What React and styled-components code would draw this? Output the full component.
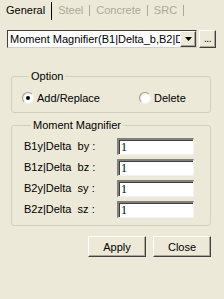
import React, { useState } from "react";
import styled, { createGlobalStyle } from "styled-components";

const GlobalStyle = createGlobalStyle`
  html, body {
    margin: 0;
    padding: 0;
    background: #ece9d8;
    width: 224px;
    height: 299px;
    overflow: hidden;
  }
  * { box-sizing: border-box; }
`;

const fields = [
  { label: "B1y|Delta  by :", value: "1" },
  { label: "B1z|Delta  bz :", value: "1" },
  { label: "B2y|Delta  sy :", value: "1" },
  { label: "B2z|Delta  sz :", value: "1" },
];

const tabs = ["General", "Steel", "Concrete", "SRC"];

const App = () => {
  const [mode, setMode] = useState("add");

  return (
    <Page>
      <GlobalStyle />
      <Tabs>
        {tabs.map((t, i) => (
          <React.Fragment key={t}>
            <Tab active={i === 0}>{t}</Tab>
            <Sep active={i === 0} />
          </React.Fragment>
        ))}
      </Tabs>

      <ComboRow>
        <Combo>
          <ComboText>Moment Magnifier(B1|Delta_b,B2|Delta_s)</ComboText>
          <DropButton>
            <svg width="7" height="4" viewBox="0 0 7 4">
              <path d="M0 0h7L3.5 4z" fill="#000" />
            </svg>
          </DropButton>
        </Combo>
        <SmallButton>...</SmallButton>
      </ComboRow>

      <Group>
        <Legend>Option</Legend>
        <RadioRow>
          <RadioItem onClick={() => setMode("add")}>
            <RadioDot checked={mode === "add"} />
            <span>Add/Replace</span>
          </RadioItem>
          <RadioItem onClick={() => setMode("delete")}>
            <RadioDot checked={mode === "delete"} />
            <span>Delete</span>
          </RadioItem>
        </RadioRow>
      </Group>

      <Group second>
        <Legend>Moment Magnifier</Legend>
        <FieldGrid>
          {fields.map((f) => (
            <React.Fragment key={f.label}>
              <Label>{f.label}</Label>
              <Input defaultValue={f.value} />
            </React.Fragment>
          ))}
        </FieldGrid>
      </Group>

      <Buttons>
        <Button>Apply</Button>
        <Button>Close</Button>
      </Buttons>
    </Page>
  );
};

export default App;

const Page = styled.div`
  width: 224px;
  height: 299px;
  font-family: "Liberation Sans", Arial, sans-serif;
  font-size: 11px;
  color: #000;
  background: #ece9d8;
`;

const Tabs = styled.div`
  height: 20px;
  display: flex;
  align-items: center;
  padding-left: 6px;
  padding-top: 1px;
`;

const Tab = styled.span`
  color: ${(p) => (p.active ? "#000" : "#aca899")};
  line-height: 13px;
`;

const Sep = styled.span`
  width: 1px;
  height: ${(p) => (p.active ? "18px" : "11px")};
  background: ${(p) => (p.active ? "#000" : "#aca899")};
  margin: 0 6px;
`;

const ComboRow = styled.div`
  display: flex;
  margin-top: 10px;
  margin-left: 7px;
  gap: 2px;
  height: 18px;
`;

const Combo = styled.div`
  width: 190px;
  height: 18px;
  display: flex;
  align-items: center;
  background: #fff;
  border-top: 1px solid #404040;
  border-left: 1px solid #404040;
  border-right: 1px solid #d4d0c8;
  border-bottom: 1px solid #d4d0c8;
  padding-left: 2px;
  overflow: hidden;
`;

const ComboText = styled.span`
  flex: 1;
  min-width: 0;
  white-space: nowrap;
  overflow: hidden;
`;

const DropButton = styled.div`
  width: 16px;
  height: 16px;
  flex: none;
  display: flex;
  align-items: center;
  justify-content: center;
  background: #ece9d8;
  border-top: 1px solid #fff;
  border-left: 1px solid #fff;
  border-right: 1px solid #404040;
  border-bottom: 1px solid #404040;
  box-shadow: inset -1px -1px 0 #aca899;
`;

const SmallButton = styled.div`
  width: 17px;
  height: 18px;
  display: flex;
  align-items: flex-end;
  justify-content: center;
  padding-bottom: 3px;
  font-size: 10px;
  line-height: 10px;
  letter-spacing: -0.5px;
  background: #ece9d8;
  border-top: 1px solid #fff;
  border-left: 1px solid #fff;
  border-right: 1px solid #404040;
  border-bottom: 1px solid #404040;
  box-shadow: inset -1px -1px 0 #aca899;
`;

const Group = styled.fieldset`
  width: 200px;
  margin: ${(p) => (p.second ? "5px" : "21px")} 0 0 11px;
  border: 1px solid #d0d0bf;
  border-radius: 3px;
  padding: ${(p) => (p.second ? "6px 12px 7px 12px" : "8px 10px 8px 10px")};
  min-width: 0;
`;

const Legend = styled.legend`
  margin-left: 7px;
  padding: 0 2px;
  line-height: 14px;
  color: #000;
`;

const RadioRow = styled.div`
  display: grid;
  grid-template-columns: 117px auto;
  height: 13px;
  align-items: center;
`;

const RadioItem = styled.label`
  display: flex;
  align-items: center;
  gap: 3px;
  cursor: default;
`;

const RadioDot = styled.span`
  width: 12px;
  height: 12px;
  border-radius: 50%;
  background: radial-gradient(circle at 60% 60%, #fff 45%, #e0ddd0 100%);
  border: 1px solid;
  border-color: #9a9a90 #f4f3ee #f4f3ee #9a9a90;
  display: flex;
  align-items: center;
  justify-content: center;

  &::after {
    content: "";
    width: 4px;
    height: 4px;
    border-radius: 50%;
    background: #000;
    display: ${(p) => (p.checked ? "block" : "none")};
  }
`;

const FieldGrid = styled.div`
  display: grid;
  grid-template-columns: 93px 77px;
  row-gap: 4px;
  align-items: center;
`;

const Label = styled.span`
  white-space: pre;
  line-height: 17px;
`;

const Input = styled.input`
  width: 77px;
  height: 17px;
  margin: 0;
  padding: 0 0 0 2px;
  font-family: "Liberation Serif", "Times New Roman", serif;
  font-size: 12px;
  background: #fff;
  border-top: 2px solid #808080;
  border-left: 2px solid #808080;
  border-right: 1px solid #f4f3ee;
  border-bottom: 1px solid #f4f3ee;
  box-shadow: inset 1px 1px 0 #404040;
  outline: none;
`;

const Buttons = styled.div`
  display: flex;
  justify-content: flex-end;
  gap: 7px;
  margin-top: 10px;
  padding-right: 13px;
`;

const Button = styled.button`
  width: 58px;
  height: 21px;
  margin: 0;
  padding: 0;
  font-family: "Liberation Sans", Arial, sans-serif;
  font-size: 11px;
  color: #000;
  background: #ece9d8;
  border-top: 1px solid #fff;
  border-left: 1px solid #fff;
  border-right: 1px solid #404040;
  border-bottom: 1px solid #404040;
  box-shadow: inset -1px -1px 0 #aca899;
`;
